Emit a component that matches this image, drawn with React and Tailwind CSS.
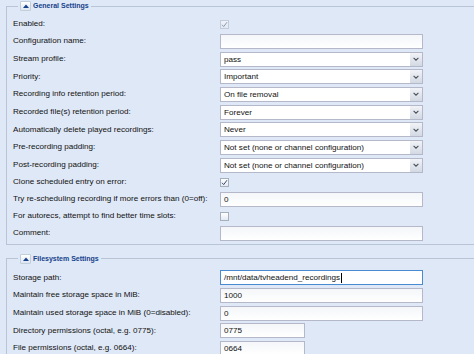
import { useState } from 'react';

const general = [
  { label: 'Enabled:', type: 'check', checked: true, disabled: true },
  { label: 'Configuration name:', type: 'text', value: '' },
  { label: 'Stream profile:', type: 'select', value: 'pass' },
  { label: 'Priority:', type: 'select', value: 'Important' },
  { label: 'Recording info retention period:', type: 'select', value: 'On file removal' },
  { label: 'Recorded file(s) retention period:', type: 'select', value: 'Forever' },
  { label: 'Automatically delete played recordings:', type: 'select', value: 'Never' },
  { label: 'Pre-recording padding:', type: 'select', value: 'Not set (none or channel configuration)' },
  { label: 'Post-recording padding:', type: 'select', value: 'Not set (none or channel configuration)' },
  { label: 'Clone scheduled entry on error:', type: 'check', checked: true },
  { label: 'Try re-scheduling recording if more errors than (0=off):', type: 'text', value: '0' },
  { label: 'For autorecs, attempt to find better time slots:', type: 'check', checked: false },
  { label: 'Comment:', type: 'text', value: '' },
];

const filesystem = [
  { label: 'Storage path:', type: 'text', value: '/mnt/data/tvheadend_recordings', focus: true },
  { label: 'Maintain free storage space in MiB:', type: 'text', value: '1000' },
  { label: 'Maintain used storage space in MiB (0=disabled):', type: 'text', value: '0' },
  { label: 'Directory permissions (octal, e.g. 0775):', type: 'text', value: '0775', small: true },
  { label: 'File permissions (octal, e.g. 0664):', type: 'text', value: '0664', small: true },
];

function Toggle() {
  return (
    <span className="flex h-[10px] w-[11px] items-center justify-center rounded-[1px] border border-[#c3cedd] bg-gradient-to-b from-white to-[#dde5f0]">
      <svg width="6" height="4" viewBox="0 0 6 4">
        <polygon points="0,4 3,0.5 6,4" fill="#15428b" />
      </svg>
    </span>
  );
}

function CheckBox({ checked, disabled }) {
  return (
    <span
      className={
        'flex h-[9px] w-[9px] items-center justify-center border border-[#a4afc0] bg-gradient-to-b from-white to-[#e4e9f1] ' +
        (disabled ? 'opacity-50' : '')
      }
    >
      {checked && (
        <svg width="7" height="7" viewBox="0 0 7 7">
          <polyline points="1,3.8 2.7,5.6 6,1.2" fill="none" stroke="#3b4d6b" strokeWidth="1" />
        </svg>
      )}
    </span>
  );
}

function Field({ item }) {
  if (item.type === 'check') return <CheckBox checked={item.checked} disabled={item.disabled} />;
  if (item.type === 'select') {
    return (
      <div className="flex h-[15px] w-[203px] border border-[#b5b8c8] bg-white">
        <span className="flex-1 truncate pl-[3px] leading-[13px]">{item.value}</span>
        <span className="flex w-[12px] items-center justify-center bg-gradient-to-b from-[#f1f3f7] to-[#d3d9e3]">
          <svg width="6" height="4" viewBox="0 0 6 4">
            <polyline points="0.6,0.8 3,3.2 5.4,0.8" fill="none" stroke="#4a4f5a" strokeWidth="1.1" />
          </svg>
        </span>
      </div>
    );
  }
  return (
    <div
      className={
        'flex h-[15px] items-center bg-white pl-[3px] ' +
        (item.small ? 'w-[85px] ' : 'w-[203px] ') +
        (item.focus ? 'border-[1.5px] border-[#4a8ad0]' : 'border border-[#b5b8c8] bg-gradient-to-b from-[#f4f6f9] to-white')
      }
    >
      <span className="leading-[13px]">{item.value}</span>
      {item.focus && <span className="ml-[1px] h-[10px] w-px bg-black" />}
    </div>
  );
}

function Section({ title, rows, className }) {
  const [open] = useState(true);
  return (
    <fieldset className={'w-[500px] border border-[#b9c4d6] pb-[2px] pl-[6px] ' + className}>
      <legend className="ml-[5px] flex items-center gap-[2px] px-[2px]">
        <Toggle />
        <span className="text-[7px] font-bold leading-[10px] text-[#15428b]">{title}</span>
      </legend>
      {open && (
        <div className="pt-[5px]">
          {rows.map((r) => (
            <div
              key={r.label}
              className={'flex items-center ' + (r.type === 'check' ? 'h-[16.5px]' : 'h-[17.7px]')}
            >
              <span className="w-[207px] shrink-0 whitespace-nowrap">{r.label}</span>
              <Field item={r} />
            </div>
          ))}
        </div>
      )}
    </fieldset>
  );
}

export default function App() {
  return (
    <div className="h-[354px] w-[474px] overflow-hidden bg-[#dfe8f6] font-['Liberation_Sans',Arial,sans-serif] text-[8.1px] text-[#111]">
      <div className="pl-[6px] pt-[1px]">
        <Section title="General Settings" rows={general} />
        <Section title="Filesystem Settings" rows={filesystem} className="mt-[8.5px]" />
      </div>
    </div>
  );
}
